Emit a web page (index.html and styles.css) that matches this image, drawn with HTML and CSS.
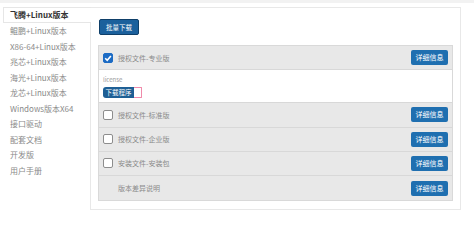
FILE: index.html
```html
<!DOCTYPE html>
<html lang="zh">
<head>
<meta charset="utf-8">
<title>下载</title>
<link rel="stylesheet" href="styles.css">
</head>
<body>
<div class="topband"></div>
<div class="main">
  <ul class="sidebar">
    <li class="nav-item active">飞腾+Linux版本</li>
    <li class="nav-item">鲲鹏+Linux版本</li>
    <li class="nav-item">X86-64+Linux版本</li>
    <li class="nav-item">兆芯+Linux版本</li>
    <li class="nav-item">海光+Linux版本</li>
    <li class="nav-item">龙芯+Linux版本</li>
    <li class="nav-item">Windows版本X64</li>
    <li class="nav-item">接口驱动</li>
    <li class="nav-item">配套文档</li>
    <li class="nav-item">开发版</li>
    <li class="nav-item">用户手册</li>
  </ul>
  <div class="panel">
    <button class="btn-batch">批量下载</button>
    <div class="list">
      <div class="row">
        <span class="check checked"><svg viewBox="0 0 10 10" width="10" height="10"><path d="M2.2 5.2 L4.2 7.2 L7.9 2.9" fill="none" stroke="#fff" stroke-width="1.6"/></svg></span>
        <span class="label">授权文件-专业版</span>
        <button class="btn-detail">详细信息</button>
      </div>
      <div class="row expanded">
        <div class="small">license</div>
        <div class="dl-group"><span class="btn-dl">下载程序</span><span class="dl-tail"></span></div>
      </div>
      <div class="row">
        <span class="check"></span>
        <span class="label">授权文件-标准版</span>
        <button class="btn-detail">详细信息</button>
      </div>
      <div class="row">
        <span class="check"></span>
        <span class="label">授权文件-企业版</span>
        <button class="btn-detail">详细信息</button>
      </div>
      <div class="row">
        <span class="check"></span>
        <span class="label">安装文件-安装包</span>
        <button class="btn-detail">详细信息</button>
      </div>
      <div class="row">
        <span class="label nocheck">版本差异说明</span>
        <button class="btn-detail">详细信息</button>
      </div>
    </div>
  </div>
</div>
</body>
</html>
```
FILE: styles.css
```css
* { box-sizing: border-box; }
html, body {
  margin: 0;
  padding: 0;
  background: #fff;
  font-family: "Noto Sans CJK SC", "Noto Sans", sans-serif;
}
.topband {
  height: 3px;
  background: #f2f2f2;
}
.main {
  display: flex;
  align-items: flex-start;
  margin-top: 4px;
  padding-left: 3px;
  padding-right: 13px;
}
.sidebar {
  list-style: none;
  margin: 0;
  padding: 0;
  width: 87px;
  flex: none;
  position: relative;
  z-index: 1;
}
.nav-item {
  height: 15.5px;
  line-height: 15.5px;
  padding-left: 7px;
  font-size: 8px;
  color: #8a8a8a;
  white-space: nowrap;
}
.nav-item.active {
  height: 16px;
  line-height: 14px;
  color: #333;
  font-weight: 700;
  background: #fff;
  border: 1px solid #e6e6e6;
  border-right: none;
  margin-right: -1px;
  padding-left: 6px;
}
.panel {
  flex: 1;
  border: 1px solid #e8e8e8;
  padding: 11px 7px 8px 7px;
}
.btn-batch {
  display: block;
  margin-left: 1px;
  width: 40px;
  height: 16px;
  padding: 0;
  border: 1px solid #0f3f69;
  border-radius: 2px;
  background: #1b609c;
  color: #fff;
  font-family: inherit;
  font-size: 6.5px;
  line-height: 14px;
}
.list {
  margin-top: 10px;
  border: 1px solid #d9d9d9;
}
.row {
  display: flex;
  align-items: center;
  height: 24.25px;
  background: #e8e8e8;
  border-bottom: 1px solid #d8d8d8;
  padding: 0 4px 0 4px;
}
.row:last-child { border-bottom: none; }
.row.expanded {
  height: 33px;
  background: #fff;
  display: block;
  padding: 5px 0 0 4px;
}
.check {
  width: 10px;
  height: 10px;
  border: 1px solid #8d8d8d;
  border-radius: 2px;
  background: #fff;
  flex: none;
  display: flex;
}
.check.checked {
  border-color: #1c6bc4;
  background: #1c6bc4;
}
.check.checked svg { margin: -1px; }
.label {
  margin-left: 5px;
  font-size: 7px;
  color: #8a8a8a;
  flex: 1;
  white-space: nowrap;
}
.label.nocheck { margin-left: 15px; }
.btn-detail {
  width: 37px;
  height: 15px;
  padding: 0;
  border: none;
  border-radius: 2px;
  background: #1f6fb0;
  color: #fff;
  font-family: inherit;
  font-size: 7px;
  line-height: 15px;
}
.small {
  font-size: 6px;
  color: #9a9a9a;
  line-height: 10px;
  height: 10px;
}
.dl-group {
  display: flex;
  margin-top: 2px;
  height: 11px;
}
.btn-dl {
  width: 31px;
  height: 11px;
  background: #1e5f95;
  color: #fff;
  font-size: 6.5px;
  line-height: 11px;
  text-align: center;
  border-radius: 3px 0 0 3px;
}
.dl-tail {
  width: 8px;
  height: 11px;
  border: 1px solid #f08aaa;
  border-left: none;
  border-radius: 0 1px 1px 0;
}
```
